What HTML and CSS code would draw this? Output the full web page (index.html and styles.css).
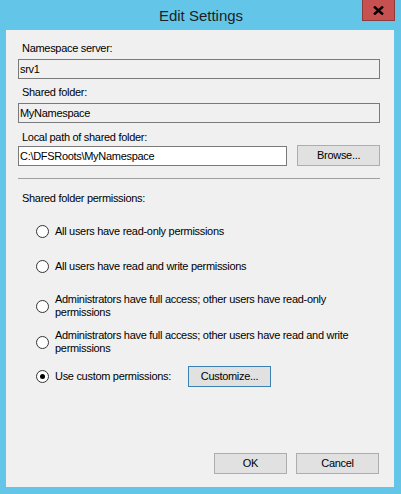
FILE: index.html
```html
<!DOCTYPE html>
<html>
<head>
<meta charset="utf-8">
<link rel="stylesheet" href="styles.css">
</head>
<body>
<div class="window">
  <div class="titlebar">
    <span class="title">Edit Settings</span>
    <div class="close"><svg width="11" height="9" viewBox="0 0 11 9"><path d="M1 0.5 L10 8.5 M10 0.5 L1 8.5" stroke="#000" stroke-width="2.4"/></svg></div>
  </div>
  <div class="panel">
    <div class="label l1">Namespace server:</div>
    <div class="field readonly">srv1</div>
    <div class="label l2">Shared folder:</div>
    <div class="field readonly">MyNamespace</div>
    <div class="label l3">Local path of shared folder:</div>
    <div class="pathrow">
      <div class="field path">C:\DFSRoots\MyNamespace</div>
      <div class="btn browse">Browse...</div>
    </div>
    <div class="sep"></div>
    <div class="label l4">Shared folder permissions:</div>
    <div class="radios">
      <div class="radio r1"><span class="circle"></span><span class="rtext">All users have read-only permissions</span></div>
      <div class="radio r2"><span class="circle"></span><span class="rtext">All users have read and write permissions</span></div>
      <div class="radio r3"><span class="circle"></span><span class="rtext">Administrators have full access; other users have read-only permissions</span></div>
      <div class="radio r4"><span class="circle"></span><span class="rtext">Administrators have full access; other users have read and write permissions</span></div>
      <div class="radio r5"><span class="circle checked"></span><span class="rtext custom">Use custom permissions:</span><div class="btn customize">Customize...</div></div>
    </div>
    <div class="footer">
      <div class="btn ok">OK</div>
      <div class="btn cancel">Cancel</div>
    </div>
  </div>
</div>
</body>
</html>
```
FILE: styles.css
```css
html, body {
  margin: 0;
  padding: 0;
}
body {
  width: 401px;
  height: 494px;
  background: #63c6e9;
  font-family: "Liberation Sans", Arial, sans-serif;
  font-size: 11px;
  letter-spacing: -0.3px;
  color: #000;
  overflow: hidden;
}
.window {
  width: 401px;
  height: 494px;
  background: #63c6e9;
  display: flex;
  flex-direction: column;
}
.titlebar {
  position: relative;
  height: 30px;
  display: flex;
  align-items: center;
  justify-content: center;
}
.title {
  font-size: 15px;
  letter-spacing: 0;
  color: #1e1e1e;
  padding-left: 1px;
}
.close {
  position: absolute;
  left: 362px;
  top: 0;
  width: 31px;
  height: 20px;
  background: #c75050;
  border: 1px solid #8e3a3a;
  border-top: none;
  display: flex;
  align-items: center;
  justify-content: center;
}
.panel {
  margin: 0 7px 7px 6px;
  flex: 1;
  background: #f0f0f0;
  display: flex;
  flex-direction: column;
  padding: 0 14px 0 12px;
}
.label {
  height: 16px;
  line-height: 16px;
  padding-left: 4px;
  white-space: nowrap;
}
.l1 { margin-top: 10px; }
.l2 { margin-top: 5px; }
.l3 { margin-top: 6px; }
.l4 { margin-top: 11px; }
.field {
  box-sizing: border-box;
  height: 20px;
  line-height: 18px;
  border: 1px solid #7a7a7a;
  padding-left: 1px;
  margin-top: 3px;
  white-space: nowrap;
}
.readonly {
  background: #f0f0f0;
}
.pathrow {
  display: flex;
  margin-top: 1px;
  align-items: flex-start;
}
.path {
  width: 270px;
  background: #fff;
  margin-top: 0;
}
.btn {
  box-sizing: border-box;
  height: 21px;
  line-height: 19px;
  border: 1px solid #adadad;
  background: #e1e1e1;
  text-align: center;
  white-space: nowrap;
}
.browse {
  width: 83px;
  margin-left: 10px;
  margin-top: -1px;
}
.sep {
  height: 1px;
  background: #a0a0a0;
  margin-top: 12px;
}
.radios {
  display: flex;
  flex-direction: column;
  padding-left: 18px;
}
.radio {
  display: flex;
  align-items: center;
}
.circle {
  box-sizing: border-box;
  width: 13px;
  height: 13px;
  border: 1px solid #333;
  border-radius: 50%;
  background: #fff;
  flex: none;
  display: flex;
  align-items: center;
  justify-content: center;
}
.checked::after {
  content: "";
  width: 5px;
  height: 5px;
  border-radius: 50%;
  background: #000;
}
.rtext {
  margin-left: 6px;
  line-height: 13px;
  width: 300px;
}
.r1 { margin-top: 17px; height: 16px; }
.r2 { margin-top: 19px; height: 16px; }
.r3 { margin-top: 18px; height: 28px; }
.r4 { margin-top: 8px; height: 28px; }
.r5 { margin-top: 10px; height: 21px; }
.custom {
  width: 133px;
  flex: none;
}
.customize {
  width: 83px;
  border-color: #3c7fb1;
}
.footer {
  display: flex;
  justify-content: flex-end;
  gap: 9px;
  margin-top: auto;
  margin-bottom: 13px;
}
.ok {
  width: 73px;
}
.cancel {
  width: 83px;
  margin-right: 1px;
}
```
